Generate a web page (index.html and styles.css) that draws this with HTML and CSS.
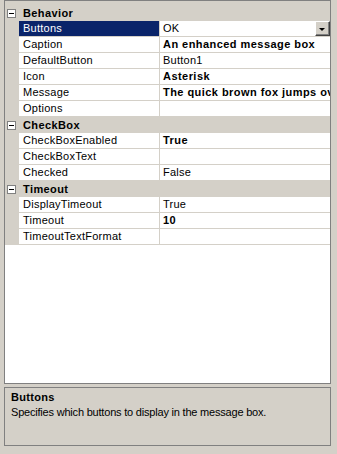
FILE: index.html
```html
<!DOCTYPE html>
<html lang="en">
<head>
  <meta charset="UTF-8" />
  <title>Property Grid</title>
  <link rel="stylesheet" href="styles.css">
</head>
<body>
  <div class="grid">
    <div class="cat"><span class="toggle"></span><span class="cat-name">Behavior</span></div>
    <div class="row selected">
      <span class="gutter"></span><span class="name">Buttons</span>
      <span class="value">OK<span class="drop"><span class="arrow"></span></span></span>
    </div>
    <div class="row"><span class="gutter"></span><span class="name">Caption</span><span class="value bold">An enhanced message box</span></div>
    <div class="row"><span class="gutter"></span><span class="name">DefaultButton</span><span class="value">Button1</span></div>
    <div class="row"><span class="gutter"></span><span class="name">Icon</span><span class="value bold">Asterisk</span></div>
    <div class="row"><span class="gutter"></span><span class="name">Message</span><span class="value bold">The quick brown fox jumps over the lazy dog</span></div>
    <div class="row"><span class="gutter"></span><span class="name">Options</span><span class="value"></span></div>

    <div class="cat"><span class="toggle"></span><span class="cat-name">CheckBox</span></div>
    <div class="row"><span class="gutter"></span><span class="name">CheckBoxEnabled</span><span class="value bold">True</span></div>
    <div class="row"><span class="gutter"></span><span class="name">CheckBoxText</span><span class="value"></span></div>
    <div class="row"><span class="gutter"></span><span class="name">Checked</span><span class="value">False</span></div>

    <div class="cat"><span class="toggle"></span><span class="cat-name">Timeout</span></div>
    <div class="row"><span class="gutter"></span><span class="name">DisplayTimeout</span><span class="value">True</span></div>
    <div class="row"><span class="gutter"></span><span class="name">Timeout</span><span class="value bold">10</span></div>
    <div class="row"><span class="gutter"></span><span class="name">TimeoutTextFormat</span><span class="value"></span></div>

    <div class="filler"></div>
  </div>

  <div class="desc">
    <div class="desc-title">Buttons</div>
    <div class="desc-text">Specifies which buttons to display in the message box.</div>
  </div>
</body>
</html>
```

FILE: styles.css
```css
body {
  margin: 0;
  padding: 0 6px 0 4px;
  background: #d4d0c8;
  font-family: 'Liberation Sans', Arial, sans-serif;
  font-size: 11px;
  color: #000;
  width: 337px;
  height: 454px;
  box-sizing: border-box;
  overflow: hidden;
}

.grid {
  box-sizing: border-box;
  height: 384px;
  border: 1px solid #808080;
  background: #d4d0c8;
  padding-top: 4px;
  display: flex;
  flex-direction: column;
}

.cat {
  height: 16px;
  display: flex;
  align-items: center;
  flex-shrink: 0;
}

.toggle {
  box-sizing: border-box;
  width: 9px;
  height: 9px;
  margin-left: 2px;
  border: 1px solid #808080;
  background: #fff;
  position: relative;
}

.toggle::after {
  content: '';
  position: absolute;
  left: 1px;
  top: 3px;
  width: 5px;
  height: 1px;
  background: #000;
}

.cat-name {
  font-weight: bold;
  letter-spacing: 0.4px;
  margin-left: 7px;
  line-height: 16px;
}

.row {
  display: grid;
  grid-template-columns: 14px 141px 1fr;
  height: 16px;
  flex-shrink: 0;
}

.gutter {
  background: #d4d0c8;
}

.name,
.value {
  background: #fff;
  border-bottom: 1px solid #d4d0c8;
  line-height: 15px;
  height: 15px;
  white-space: nowrap;
  overflow: hidden;
  letter-spacing: 0.25px;
}

.name {
  padding-left: 4px;
  border-right: 1px solid #d4d0c8;
}

.value {
  padding-left: 3px;
  position: relative;
}

.bold {
  font-weight: bold;
  letter-spacing: 0.45px;
}

.selected .name {
  background: #0a246a;
  color: #fff;
}

.drop {
  position: absolute;
  right: 0;
  top: 0;
  box-sizing: border-box;
  width: 15px;
  height: 15px;
  background: #d4d0c8;
  border-top: 1px solid #fff;
  border-left: 1px solid #fff;
  border-right: 1px solid #404040;
  border-bottom: 1px solid #404040;
  box-shadow: inset -1px -1px 0 #808080;
  display: flex;
  align-items: center;
  justify-content: center;
}

.arrow {
  width: 0;
  height: 0;
  border-left: 3px solid transparent;
  border-right: 3px solid transparent;
  border-top: 3px solid #000;
  margin: 1px 1px 0 0;
}

.filler {
  flex-grow: 1;
  background: #fff;
}

.desc {
  box-sizing: border-box;
  margin-top: 3px;
  height: 59px;
  border: 1px solid #808080;
  padding: 2px 6px;
}

.desc-title {
  font-weight: bold;
  letter-spacing: 0.3px;
  line-height: 15px;
}

.desc-text {
  letter-spacing: -0.2px;
  line-height: 15px;
}
```
